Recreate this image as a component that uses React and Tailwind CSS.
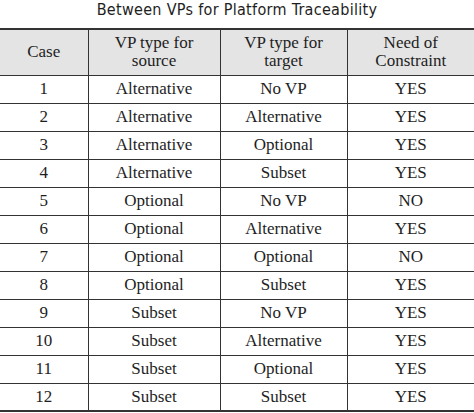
const ROWS = [
  ['1', 'Alternative', 'No VP', 'YES'],
  ['2', 'Alternative', 'Alternative', 'YES'],
  ['3', 'Alternative', 'Optional', 'YES'],
  ['4', 'Alternative', 'Subset', 'YES'],
  ['5', 'Optional', 'No VP', 'NO'],
  ['6', 'Optional', 'Alternative', 'YES'],
  ['7', 'Optional', 'Optional', 'NO'],
  ['8', 'Optional', 'Subset', 'YES'],
  ['9', 'Subset', 'No VP', 'YES'],
  ['10', 'Subset', 'Alternative', 'YES'],
  ['11', 'Subset', 'Optional', 'YES'],
  ['12', 'Subset', 'Subset', 'YES'],
]

export default function App() {
  return (
    <div className="w-[474px] bg-white text-[#1e1e1e]">
      <div className="h-[28px] pt-[1px] text-center text-[16px] leading-[17px] tracking-[0.3px] font-[family-name:'DejaVu_Sans_Condensed','Liberation_Sans',sans-serif]">
        Between VPs for Platform Traceability
      </div>

      <table className="w-full table-fixed border-collapse border-t-2 border-b-2 border-[#333] font-[family-name:'Liberation_Serif',serif] text-[17px]">
        <colgroup>
          <col className="w-[88px]" />
          <col className="w-[132px]" />
          <col className="w-[127px]" />
          <col className="w-[127px]" />
        </colgroup>
        <thead>
          <tr className="h-[46px] bg-[#e4e4e4] border-b border-[#333] leading-[18px]">
            <th className="font-normal border-r border-[#333]">Case</th>
            <th className="font-normal border-r border-[#333]">VP type for<br />source</th>
            <th className="font-normal border-r border-[#333]">VP type for<br />target</th>
            <th className="font-normal">Need of<br />Constraint</th>
          </tr>
        </thead>
        <tbody>
          {ROWS.map(r => (
            <tr key={r[0]} className="h-[28px] border-b border-[#333] text-center">
              <td className="border-r border-[#333]">{r[0]}</td>
              <td className="border-r border-[#333]">{r[1]}</td>
              <td className="border-r border-[#333]">{r[2]}</td>
              <td>{r[3]}</td>
            </tr>
          ))}
        </tbody>
      </table>
    </div>
  )
}
